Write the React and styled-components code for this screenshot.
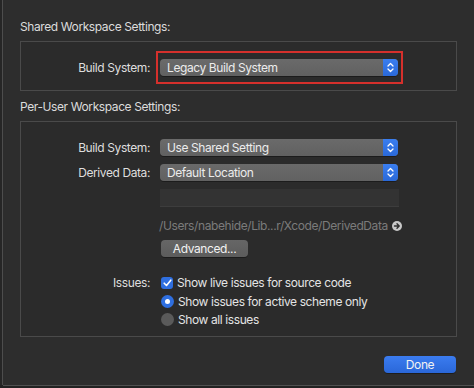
import React from 'react'
import styled, { createGlobalStyle } from 'styled-components'

const GlobalStyle = createGlobalStyle`
  html, body {
    margin: 0;
    padding: 0;
    background: #1f1f1f;
    overflow: hidden;
  }
  * { box-sizing: border-box; }
`

/* frame */
const Screen = styled.div`
  display: flex;
  width: 474px;
  height: 388px;
  background: #222;
  font-family: Inter, "Liberation Sans", sans-serif;
  font-size: 12px;
  letter-spacing: -0.4px;
  color: #e2e2e2;
`
const LeftEdge = styled.div`
  width: 3px;
  height: 385px;
  background: #262626;
  border-right: 1px solid #4d4d4d;
`
const Window = styled.div`
  flex: 1;
  height: 386px;
  display: flex;
  flex-direction: column;
  padding: 17px 17px 0 17px;
  background: #2d2d2d;
  border-bottom: 1px solid #505050;
`
const SectionTitle = styled.div`
  height: 19px;
  line-height: 19px;
  margin-bottom: 5px;
  color: #dcdcdc;
`
const Box = styled.div`
  border: 1px solid #4a4a4a;
  background: #2b2b2b;
  height: ${(p) => p.h}px;
  margin-bottom: ${(p) => p.mb || 0}px;
  padding-top: ${(p) => p.pt}px;
`
const Row = styled.div`
  display: grid;
  grid-template-columns: 129px 250px;
  column-gap: 10px;
  align-items: center;
  margin-top: ${(p) => p.mt || 0}px;
  height: ${(p) => p.h || 17}px;
`
const Label = styled.div`
  text-align: right;
  color: #dedede;
`
const Highlight = styled.div`
  position: relative;
  width: 238px;
  &::after {
    content: '';
    position: absolute;
    top: -8px;
    left: -4px;
    right: -5px;
    bottom: -8px;
    border: 2px solid #d5302c;
    pointer-events: none;
  }
`
const Popup = styled.div`
  display: flex;
  align-items: center;
  width: 238px;
  height: 17px;
  border-radius: 4px;
  background: linear-gradient(#6a6a6a, #616161);
  box-shadow: 0 1px 0 rgba(0, 0, 0, 0.35);
  overflow: hidden;
`
const PopupText = styled.span`
  flex: 1;
  padding-left: 7px;
  color: #ececec;
  white-space: nowrap;
`
const Stepper = styled.div`
  width: 15px;
  height: 17px;
  display: flex;
  align-items: center;
  justify-content: center;
  background: linear-gradient(#3a7ef0, #2a69d8);
`
const Field = styled.div`
  width: 239px;
  height: 18px;
  background: #333333;
  border-bottom: 1px solid #3d3d3d;
`
const PathLine = styled.div`
  display: flex;
  align-items: center;
  gap: 4px;
  margin-left: -1px;
  color: #7b7b7b;
  white-space: nowrap;
`
const Button = styled.div`
  display: flex;
  align-items: center;
  justify-content: center;
  width: ${(p) => p.w}px;
  height: 17px;
  border-radius: 4px;
  margin-left: ${(p) => p.ml || 0}px;
  color: #f2f2f2;
  background: ${(p) =>
    p.primary
      ? 'linear-gradient(#3b7cf0, #2a67d8)'
      : 'linear-gradient(#666, #5c5c5c)'};
  box-shadow: 0 1px 0 rgba(0, 0, 0, 0.35);
`
const Option = styled.div`
  display: flex;
  align-items: center;
  gap: 4px;
  margin-left: 1px;
  color: #e4e4e4;
  white-space: nowrap;
`
const Check = styled.div`
  width: 12px;
  height: 12px;
  border-radius: 3px;
  display: flex;
  align-items: center;
  justify-content: center;
  background: #2f6fe0;
`
const Radio = styled.div`
  width: 13px;
  height: 13px;
  border-radius: 50%;
  display: flex;
  align-items: center;
  justify-content: center;
  background: ${(p) => (p.on ? '#2f6fe0' : '#5a5a5a')};
  &::after {
    content: '';
    display: ${(p) => (p.on ? 'block' : 'none')};
    width: 5px;
    height: 5px;
    border-radius: 50%;
    background: #fff;
  }
`
const Footer = styled.div`
  display: flex;
  justify-content: flex-end;
  padding-top: 19px;
  padding-right: 1px;
`

function Chevrons() {
  return (
    <svg width="7" height="11" viewBox="0 0 7 11">
      <path d="M1 4 L3.5 1.5 L6 4 M1 7 L3.5 9.5 L6 7" fill="none" stroke="#fff" strokeWidth="1.3" strokeLinecap="round" strokeLinejoin="round" />
    </svg>
  )
}

function Select({ children }) {
  return (
    <Popup>
      <PopupText>{children}</PopupText>
      <Stepper><Chevrons /></Stepper>
    </Popup>
  )
}

export default function App() {
  return (
    <>
      <GlobalStyle />
      <Screen>
        <LeftEdge />
        <Window>
          <SectionTitle>Shared Workspace Settings:</SectionTitle>
          <Box h={50} pt={17} mb={6}>
            <Row>
              <Label>Build System:</Label>
              <Highlight>
                <Select>Legacy Build System</Select>
              </Highlight>
            </Row>
          </Box>
          <SectionTitle>Per-User Workspace Settings:</SectionTitle>
          <Box h={216} pt={17}>
            <Row>
              <Label>Build System:</Label>
              <Select>Use Shared Setting</Select>
            </Row>
            <Row mt={8}>
              <Label>Derived Data:</Label>
              <Select>Default Location</Select>
            </Row>
            <Row mt={8} h={18}>
              <span />
              <Field />
            </Row>
            <Row mt={10}>
              <span />
              <PathLine>
                /Users/nabehide/Lib...r/Xcode/DerivedData
                <svg width="10" height="10" viewBox="0 0 10 10">
                  <circle cx="5" cy="5" r="5" fill="#c8c8c8" />
                  <path d="M2.5 5 H7 M5 2.8 L7.2 5 L5 7.2" fill="none" stroke="#2d2d2d" strokeWidth="1.4" strokeLinecap="round" strokeLinejoin="round" />
                </svg>
              </PathLine>
            </Row>
            <Row mt={6}>
              <span />
              <Button w={87} ml={1}>Advanced...</Button>
            </Row>
            <Row mt={18} h={14}>
              <Label>Issues:</Label>
              <Option>
                <Check>
                  <svg width="9" height="8" viewBox="0 0 9 8">
                    <path d="M1.2 4.2 L3.5 6.5 L7.8 1.2" fill="none" stroke="#fff" strokeWidth="1.6" strokeLinecap="round" strokeLinejoin="round" />
                  </svg>
                </Check>
                Show live issues for source code
              </Option>
            </Row>
            <Row mt={5} h={14}>
              <span />
              <Option>
                <Radio on />
                Show issues for active scheme only
              </Option>
            </Row>
            <Row mt={4} h={14}>
              <span />
              <Option>
                <Radio />
                Show all issues
              </Option>
            </Row>
          </Box>
          <Footer>
            <Button primary w={72}>Done</Button>
          </Footer>
        </Window>
      </Screen>
    </>
  )
}
